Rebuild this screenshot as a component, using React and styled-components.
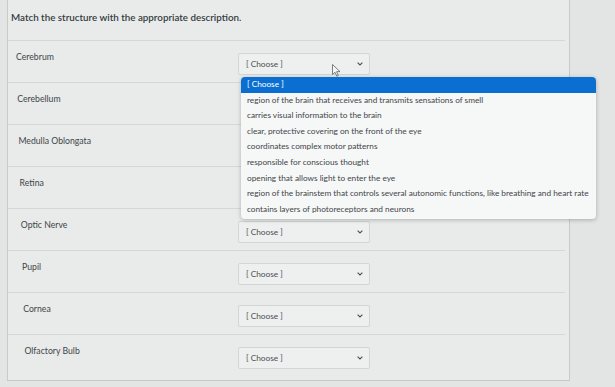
import React from "react";
import styled, { createGlobalStyle } from "styled-components";

const Global = createGlobalStyle`
  html, body { margin: 0; padding: 0; }
  body {
    width: 615px; height: 387px; overflow: hidden;
    background: #e2e5e4;
    font-family: Lato, "Open Sans", sans-serif;
    color: #3b4244;
  }
`;

const Page = styled.div`
  width: 615px;
  height: 387px;
  padding-left: 7px;
  box-sizing: border-box;
`;

const Panel = styled.div`
  width: 563px;
  box-sizing: border-box;
  background: #e8ebea;
  border: 1px solid #c6cac9;
  border-top: none;
  position: relative;
`;

const Title = styled.h1`
  margin: 0 4px 0 0;
  padding: 11px 0 0 3px;
  height: 29px;
  font-size: 9.8px;
  font-weight: 600;
  color: #343b3e;
  border-bottom: 1px solid #d3d7d6;
`;

const Row = styled.div`
  display: grid;
  grid-template-columns: 230px 132px;
  height: ${(p) => (p.$last ? 44 : 41)}px;
  border-bottom: 1px solid ${(p) => (p.$last ? "transparent" : "#d3d7d6")};
  margin-right: 4px;
`;

const Label = styled.div`
  padding: 10px 0 0 ${(p) => p.$indent}px;
  font-size: 8.7px;
  color: #3e4547;
`;

const SelectCell = styled.div`
  padding-top: 12px;
`;

const Select = styled.div`
  height: 22px;
  box-sizing: border-box;
  border: 1px solid #d2d6d5;
  border-radius: 2px;
  background: #edf0ef;
  display: flex;
  align-items: center;
  justify-content: space-between;
  padding: 0 6px 0 7px;
  font-size: 8.3px;
  color: #4a5153;
`;

const Chevron = () => (
  <svg width="6" height="4" viewBox="0 0 6 4">
    <path d="M0.6 0.6 L3 3 L5.4 0.6" fill="none" stroke="#4a5153" strokeWidth="1.1" />
  </svg>
);

const Menu = styled.ul`
  position: absolute;
  left: 233px;
  top: 77px;
  width: 355px;
  margin: 0;
  padding: 0 0 2px 0;
  list-style: none;
  background: #f6f7f7;
  border-radius: 4px;
  box-shadow: 0 1px 4px rgba(0, 0, 0, 0.25);
  z-index: 2;
`;

const Option = styled.li`
  height: 15.6px;
  line-height: 15.6px;
  padding-left: 6px;
  font-size: 8.25px;
  white-space: nowrap;
  color: ${(p) => (p.$active ? "#ffffff" : "#3f4649")};
  background: ${(p) => (p.$active ? "#0b6fd2" : "transparent")};
  border-radius: ${(p) => (p.$active ? "4px 4px 0 0" : "0")};
`;

const Cursor = styled.svg`
  position: absolute;
  left: 324px;
  top: 64px;
  z-index: 3;
`;

const labels = [
  "Cerebrum",
  "Cerebellum",
  "Medulla Oblongata",
  "Retina",
  "Optic Nerve",
  "Pupil",
  "Cornea",
  "Olfactory Bulb",
];

const showSelect = [true, false, false, false, true, true, true, true];

const options = [
  "[ Choose ]",
  "region of the brain that receives and transmits sensations of smell",
  "carries visual information to the brain",
  "clear, protective covering on the front of the eye",
  "coordinates complex motor patterns",
  "responsible for conscious thought",
  "opening that allows light to enter the eye",
  "region of the brainstem that controls several autonomic functions, like breathing and heart rate",
  "contains layers of photoreceptors and neurons",
];

export default function App() {
  return (
    <Page>
      <Global />
      <Panel>
        <Title>Match the structure with the appropriate description.</Title>
        {labels.map((l, i) => (
          <Row key={l} $last={i === labels.length - 1}>
            <Label $indent={8 + i * 1.2}>{l}</Label>
            <SelectCell>
              {showSelect[i] && (
                <Select>
                  <span>[ Choose ]</span>
                  <Chevron />
                </Select>
              )}
            </SelectCell>
          </Row>
        ))}
        <Menu>
          {options.map((o, i) => (
            <Option key={o} $active={i === 0}>{o}</Option>
          ))}
        </Menu>
        <Cursor width="9" height="13" viewBox="0 0 9 13">
          <path d="M0.5 0.5 L0.5 10.5 L3 8.3 L4.8 12.2 L6.3 11.5 L4.6 7.7 L8 7.6 Z" fill="#f4f5f5" stroke="#5a6163" strokeWidth="0.8" />
        </Cursor>
      </Panel>
    </Page>
  );
}
